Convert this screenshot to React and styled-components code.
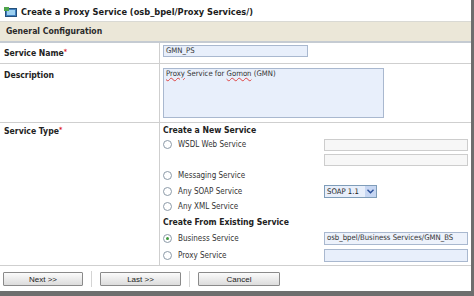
import React from 'react'
import styled, { createGlobalStyle } from 'styled-components'

const GlobalStyle = createGlobalStyle`
    html, body {
        margin: 0;
        padding: 0;
        background: #ffffff;
    }
    body {
        font-family: "DejaVu Sans Condensed", "DejaVu Sans", Tahoma, sans-serif;
        font-size: 8px;
        line-height: 11px;
        color: #222;
    }
`;

const Frame = styled.div`
    width: 474px;
    height: 296px;
    box-sizing: border-box;
    border-right: 3px solid #6e6e6e;
    border-bottom: 5px solid #6e6e6e;
    display: flex;
    flex-direction: column;
    overflow: hidden;
`;

const TitleBar = styled.div`
    height: 21px;
    flex-shrink: 0;
    display: flex;
    align-items: center;
    gap: 3px;
    padding: 2px 0 0 4px;
    box-sizing: border-box;
    font-size: 9.2px;
    font-weight: bold;
    color: #1c1c1c;
`;

const SectionHeader = styled.div`
    height: 22px;
    flex-shrink: 0;
    box-sizing: border-box;
    background: #ebe7d8;
    border-top: 1px solid #d9d9d4;
    border-bottom: 2px solid #c5cbd2;
    display: flex;
    align-items: center;
    padding-left: 6px;
    font-weight: bold;
    font-size: 8.6px;
    color: #2a2a2a;
`;

const Row = styled.div`
    display: grid;
    grid-template-columns: 159px 1fr;
    height: ${({ $h }) => $h}px;
    flex-shrink: 0;
    border-bottom: 1px solid #cfcfcf;
    overflow: hidden;
`;

const Label = styled.div`
    padding: ${({ $top }) => $top}px 0 0 4px;
    font-weight: bold;
    font-size: 8.6px;
    color: #222;
`;

const Req = styled.span`
    color: #d22;
    font-size: 7px;
    vertical-align: top;
    line-height: 9px;
`;

const Field = styled.div`
    border-left: 1px solid #cfcfcf;
    padding: ${({ $top }) => $top}px 0 0 3px;
`;

const TextBox = styled.div`
    box-sizing: border-box;
    width: ${({ $w }) => $w}px;
    height: ${({ $h }) => $h || 12}px;
    background: ${({ $bg }) => $bg || '#e8effb'};
    border: 1px solid ${({ $bd }) => $bd || '#a9b8cf'};
    font-size: 7.7px;
    line-height: 10px;
    padding: 0 2px;
    color: #333;
    white-space: nowrap;
    overflow: hidden;
`;

const Spell = styled.span`
    text-decoration: underline wavy #d44;
    text-decoration-thickness: 1px;
    text-underline-offset: 1px;
`;

const Panel = styled.div`
    border-left: 1px solid #cfcfcf;
    padding: 1px 4px 0 3px;
    display: flex;
    flex-direction: column;
`;

const Heading = styled.div`
    height: ${({ $h }) => $h}px;
    display: flex;
    align-items: center;
    font-weight: bold;
    font-size: 8.6px;
    color: #222;
`;

const OptionRow = styled.div`
    height: ${({ $h }) => $h}px;
    display: grid;
    grid-template-columns: 161px 1fr;
    align-items: center;
`;

const OptionLabel = styled.label`
    display: flex;
    align-items: center;
    gap: 6px;
    font-size: 8px;
    color: #333;
`;

const Radio = styled.span`
    width: 9px;
    height: 9px;
    box-sizing: border-box;
    border-radius: 50%;
    border: 1px solid #8c9aa8;
    background: #fff;
    display: inline-flex;
    align-items: center;
    justify-content: center;
    &::after {
        content: '';
        width: 3px;
        height: 3px;
        border-radius: 50%;
        background: ${({ $checked }) => ($checked ? '#3e9a3e' : 'transparent')};
    }
`;

const Select = styled.div`
    box-sizing: border-box;
    width: 53px;
    height: 13px;
    border: 1px solid #7f9db9;
    background: #e8effb;
    display: flex;
    align-items: center;
    justify-content: space-between;
    padding-left: 2px;
    font-size: 7.7px;
    color: #222;
    white-space: nowrap;
`;

const SelectArrow = styled.span`
    width: 11px;
    height: 11px;
    background: #c6d6f2;
    display: flex;
    align-items: center;
    justify-content: center;
`;

const Footer = styled.div`
    flex: 1;
    display: flex;
    align-items: center;
    padding: 1px 0 0 3px;
    gap: 8px;
`;

const Button = styled.div`
    box-sizing: border-box;
    width: ${({ $w }) => $w}px;
    height: 14px;
    border: 1px solid #8a8a8a;
    border-radius: 1px;
    background: linear-gradient(#fbfbfb, #dcdcdc);
    display: flex;
    align-items: center;
    justify-content: center;
    font-family: "Liberation Sans", Arial, sans-serif;
    font-size: 8px;
    color: #222;
`;

const Divider = styled.span`
    width: 1px;
    height: 16px;
    background: #d4d4d4;
`;

const ServiceIcon = () => (
    <svg width="14" height="12" viewBox="0 0 14 12">
        <rect x="1.5" y="2.5" width="11" height="8" fill="#3f7fbf" stroke="#24507a" strokeWidth="1" />
        <rect x="3" y="4" width="8" height="5" fill="#9cd0f0" />
        <path d="M0 1 L5 1 L5 5 L0 5 Z" fill="#4fa54a" />
    </svg>
)

const Option = ({ label, checked }) => (
    <OptionLabel>
        <Radio $checked={checked} />
        {label}
    </OptionLabel>
)

const App = () => {
    return (
        <Frame>
            <GlobalStyle />
            <TitleBar>
                <ServiceIcon />
                Create a Proxy Service (osb_bpel/Proxy Services/)
            </TitleBar>
            <SectionHeader>General Configuration</SectionHeader>
            <Row $h={20}>
                <Label $top={5}>Service Name<Req>*</Req></Label>
                <Field $top={2}>
                    <TextBox $w={145}>GMN_PS</TextBox>
                </Field>
            </Row>
            <Row $h={58}>
                <Label $top={6}>Description</Label>
                <Field $top={4}>
                    <TextBox $w={221} $h={50}>
                        <Spell>Proxy</Spell> Service for <Spell>Gomon</Spell> (GMN)
                    </TextBox>
                </Field>
            </Row>
            <Row $h={142}>
                <Label $top={3}>Service Type<Req>*</Req></Label>
                <Panel>
                    <Heading $h={13}>Create a New Service</Heading>
                    <OptionRow $h={15}>
                        <Option label="WSDL Web Service" />
                        <TextBox $w={144} $bg="#f7f7f7" $bd="#cdcdcd" />
                    </OptionRow>
                    <OptionRow $h={15}>
                        <span />
                        <TextBox $w={144} $bg="#f7f7f7" $bd="#cdcdcd" />
                    </OptionRow>
                    <OptionRow $h={17}>
                        <Option label="Messaging Service" />
                    </OptionRow>
                    <OptionRow $h={14}>
                        <Option label="Any SOAP Service" />
                        <Select>
                            SOAP 1.1
                            <SelectArrow>
                                <svg width="7" height="5" viewBox="0 0 7 5">
                                    <path d="M0.5 0.8 L3.5 3.8 L6.5 0.8" fill="none" stroke="#2a4f9a" strokeWidth="1.4" />
                                </svg>
                            </SelectArrow>
                        </Select>
                    </OptionRow>
                    <OptionRow $h={17}>
                        <Option label="Any XML Service" />
                    </OptionRow>
                    <Heading $h={14}>Create From Existing Service</Heading>
                    <OptionRow $h={18}>
                        <Option label="Business Service" checked />
                        <TextBox $w={144} $h={13} $bg="#edf2fb">osb_bpel/Business Services/GMN_BS</TextBox>
                    </OptionRow>
                    <OptionRow $h={16}>
                        <Option label="Proxy Service" />
                        <TextBox $w={144} $h={13} />
                    </OptionRow>
                </Panel>
            </Row>
            <Footer>
                <Button $w={80}>Next &gt;&gt;</Button>
                <Divider />
                <Button $w={81}>Last &gt;&gt;</Button>
                <Divider />
                <Button $w={82}>Cancel</Button>
            </Footer>
        </Frame>
    )
}

export default App
